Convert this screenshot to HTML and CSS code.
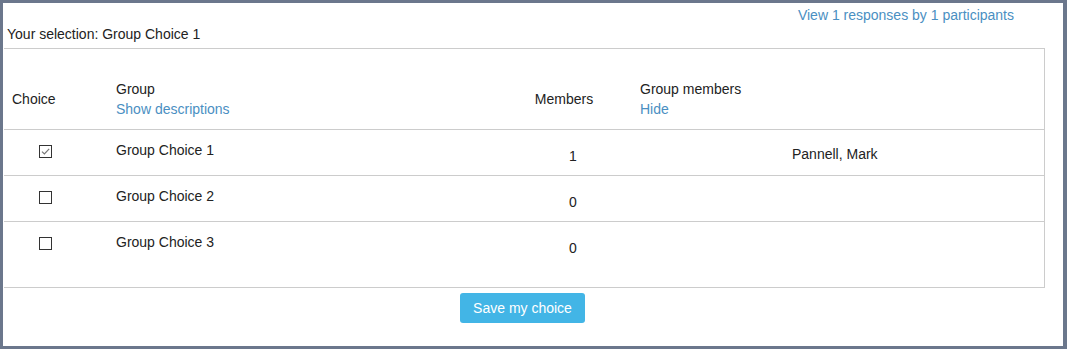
FILE: index.html
```html
<!DOCTYPE html>
<html>
<head>
<meta charset="utf-8">
<link rel="stylesheet" href="styles.css">
</head>
<body>
<div class="frame">
  <div class="responses"><a href="#">View 1 responses by 1 participants</a></div>
  <div class="selection">Your selection: Group Choice 1</div>
  <div class="box">
    <table class="choices">
      <colgroup>
        <col class="c-choice">
        <col class="c-group">
        <col class="c-members">
        <col class="c-names">
      </colgroup>
      <thead>
        <tr>
          <th>Choice</th>
          <th>Group<br><a href="#">Show descriptions</a></th>
          <th class="center">Members</th>
          <th>Group members<br><a href="#">Hide</a></th>
        </tr>
      </thead>
      <tbody>
        <tr>
          <td class="cb"><span class="check checked"><svg viewBox="0 0 13 13" width="13" height="13"><path d="M3 6.6 L5.4 9 L10.2 3.8" fill="none" stroke="#777" stroke-width="1.2"/></svg></span></td>
          <td class="name">Group Choice 1</td>
          <td class="count">1</td>
          <td class="people">Pannell, Mark</td>
        </tr>
        <tr>
          <td class="cb"><span class="check"></span></td>
          <td class="name">Group Choice 2</td>
          <td class="count">0</td>
          <td class="people"></td>
        </tr>
        <tr>
          <td class="cb"><span class="check"></span></td>
          <td class="name">Group Choice 3</td>
          <td class="count">0</td>
          <td class="people"></td>
        </tr>
      </tbody>
    </table>
  </div>
  <div class="actions"><button class="save" type="button">Save my choice</button></div>
</div>
</body>
</html>
```

FILE: styles.css
```css
html, body {
  margin: 0;
  padding: 0;
  background: #fff;
}

body {
  font-family: "Liberation Sans", Arial, sans-serif;
  font-size: 14px;
  color: #222;
}

a {
  color: #4a8fc2;
  text-decoration: none;
}

.frame {
  box-sizing: border-box;
  width: 1067px;
  height: 349px;
  border-style: solid;
  border-color: #6b778c;
  border-width: 3px 4px 3px 3px;
  padding: 3px 0 0 1px;
  background: #fff;
}

.responses {
  text-align: right;
  line-height: 18px;
  padding-right: 49px;
}

.selection {
  line-height: 20px;
  padding-left: 3px;
}

.box {
  box-sizing: border-box;
  width: 1041px;
  margin-top: 4px;
  border-top: 1px solid #cccccc;
  border-right: 1px solid #cccccc;
  border-bottom: 1px solid #cccccc;
  padding-bottom: 19px;
}

.choices {
  width: 100%;
  border-collapse: collapse;
  table-layout: fixed;
}

.c-choice { width: 100px; }
.c-group { width: 396px; }
.c-members { width: 128px; }

.choices th {
  font-weight: normal;
  text-align: left;
  vertical-align: middle;
  line-height: 20px;
  height: 80px;
  box-sizing: border-box;
  padding: 30px 0 10px 12px;
}

.choices th:first-child {
  padding-left: 8px;
}

.choices th.center {
  text-align: center;
  padding-left: 0;
}

.choices td {
  border-top: 1px solid #cccccc;
  vertical-align: top;
  line-height: 20px;
  height: 46px;
  box-sizing: border-box;
  padding: 0;
}

.choices td.cb {
  padding: 15px 0 0 35px;
}

.choices td.name {
  padding: 10px 0 0 12px;
}

.choices td.count {
  padding: 16px 0 0 18px;
  text-align: center;
}

.choices td.people {
  padding: 14px 0 0 164px;
}

.check {
  display: block;
  box-sizing: border-box;
  width: 13px;
  height: 13px;
  border: 1px solid #333;
  background: #fff;
  position: relative;
}

.check svg {
  position: absolute;
  left: -1px;
  top: -1px;
}

.actions {
  width: 1037px;
  text-align: center;
  padding-top: 5px;
}

.save {
  font-family: "Liberation Sans", Arial, sans-serif;
  font-size: 14px;
  line-height: 20px;
  color: #fff;
  background: #42b5e6;
  border: 0;
  border-radius: 3px;
  padding: 5px 13px;
  width: 125px;
  height: 30px;
}
```
